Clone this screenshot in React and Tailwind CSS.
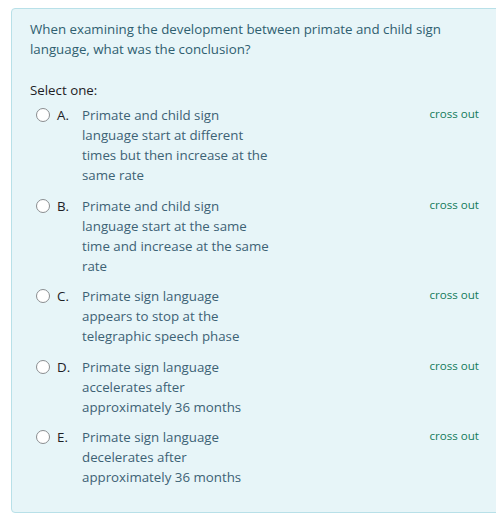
import React from 'react';

const options = [
  { letter: 'A.', text: 'Primate and child sign language start at different times but then increase at the same rate' },
  { letter: 'B.', text: 'Primate and child sign language start at the same time and increase at the same rate' },
  { letter: 'C.', text: 'Primate sign language appears to stop at the telegraphic speech phase' },
  { letter: 'D.', text: 'Primate sign language accelerates after approximately 36 months' },
  { letter: 'E.', text: 'Primate sign language decelerates after approximately 36 months' },
];

const App = () => {
  return (
    <div className="w-[496px] h-[514px] bg-white pt-2 pl-[11px] font-['Open_Sans',sans-serif] text-[13.3px] leading-5">
      <div className="w-[490px] h-[505px] bg-[#e7f5f8] border border-[#b8e0e8] rounded-[4px] pl-[18px] pr-[21px] pt-[10px]">
        <p className="text-[#2f5f70] w-[430px]">
          When examining the development between primate and child sign language, what was the conclusion?
        </p>
        <div className="mt-[21px] text-[#1d2125]">Select one:</div>
        <div className="flex flex-col gap-[10.6px] mt-[5px]">
          {options.map((o) => (
            <div key={o.letter} className="flex items-start">
              <div className="w-[14px] h-[14px] mt-[3px] ml-[6px] rounded-full border border-[#8a8d90] bg-white shrink-0" />
              <span className="ml-[7px] w-[25px] text-[#1d2125]">{o.letter}</span>
              <span className="w-[187px] text-[#3d6275]">{o.text}</span>
              <span className="ml-auto text-[11.6px] leading-4 mt-[1px] text-[#137a5a]">cross out</span>
            </div>
          ))}
        </div>
      </div>
    </div>
  );
};

export default App;
